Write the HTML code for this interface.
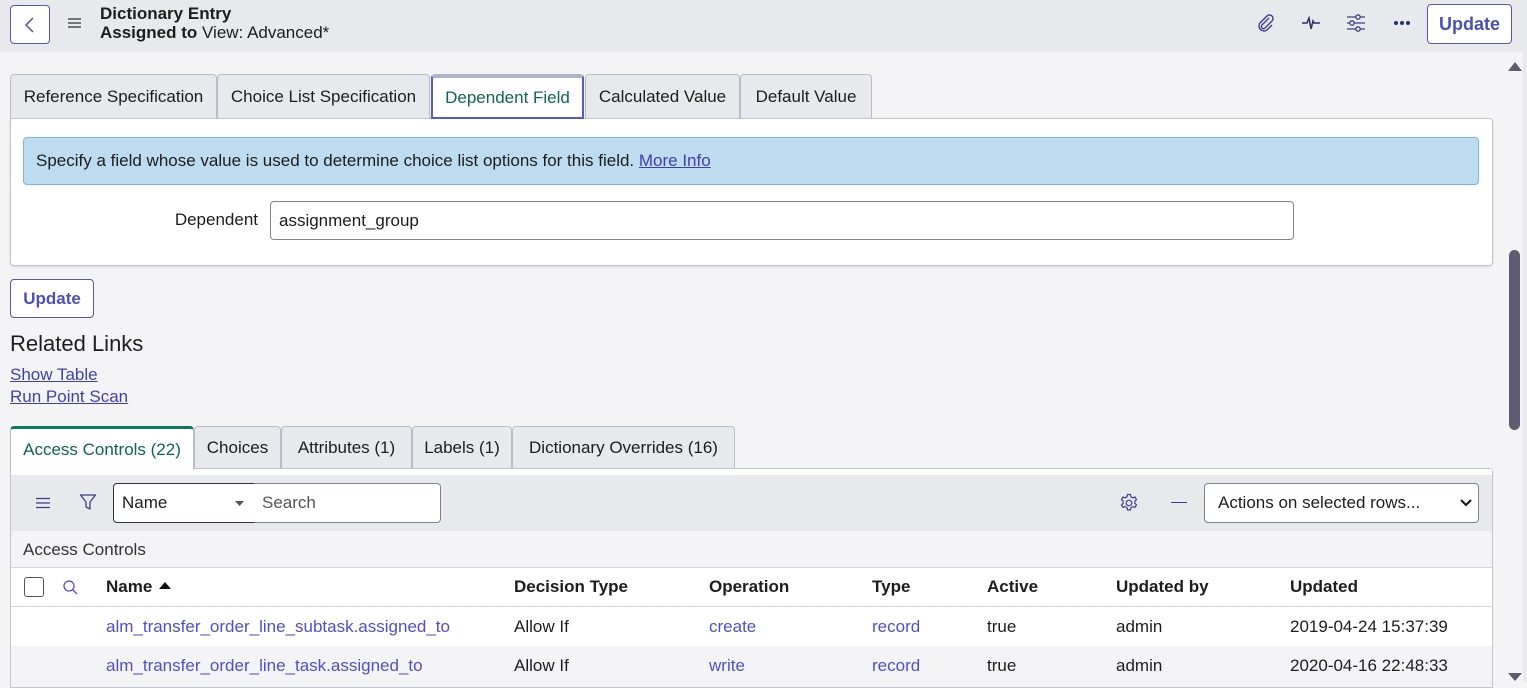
<!DOCTYPE html>
<html><head><meta charset="utf-8"><style>
*{box-sizing:border-box;margin:0;padding:0}
body{width:1527px;height:682px;overflow:hidden;background:#f4f4f6;font-family:"Liberation Sans",sans-serif;color:#1d1d1d;position:relative;font-size:17px}
.abs{position:absolute}
.hdr{left:0;top:0;width:1527px;height:52px;background:#e8e9ed}
.btn{border:1px solid #5654c0;border-radius:4px;background:#fff;color:#4b4fb8;font-weight:bold;font-size:17px;display:flex;align-items:center;justify-content:center}
.tab{top:74px;height:45px;background:#e8e9ed;border:1px solid #b9bcc6;border-bottom:none;border-radius:4px 4px 0 0;display:flex;align-items:center;justify-content:center;font-size:17px;color:#1d1d1d}
.tab2{top:426px;height:43px;background:#e8e9ed;border:1px solid #b9bcc6;border-bottom:none;border-radius:4px 4px 0 0;display:flex;align-items:center;justify-content:center;font-size:17px}
a{color:#3f3fb0;text-decoration:underline}
.th{top:577px;font-weight:bold;font-size:17px}
.td{font-size:17px}
.lnk{color:#4e4fd0}
</style></head><body>
<div class="abs hdr"></div>
<div class="abs btn" style="left:10px;top:5px;width:40px;height:39px"><svg width="14" height="18" viewBox="0 0 14 18"><path d="M10 2 L3 9 L10 16" fill="none" stroke="#4b4fb8" stroke-width="1.5"/></svg></div>
<svg class="abs" style="left:67px;top:17px" width="15" height="12"><path d="M1 2H14M1 6H14M1 10H14" stroke="#333" stroke-width="1.3"/></svg>
<div class="abs" style="left:100px;top:4px;font-weight:bold;font-size:17px;line-height:19px">Dictionary Entry<br>Assigned to <span style="font-weight:normal">View: Advanced*</span></div>
<svg class="abs" style="left:1256px;top:13px" width="20" height="20" viewBox="0 0 20 20"><path d="M13 5 L6 12 a2 2 0 0 0 3 3 L16 8 a3.5 3.5 0 0 0 -5 -5 L4 10 a5 5 0 0 0 7 7 L16 12" fill="none" stroke="#3b3e8e" stroke-width="1.4"/></svg>
<svg class="abs" style="left:1301px;top:13px" width="20" height="20"><path d="M1 10H6L8 5L10 16L12 8L13 10H19" fill="none" stroke="#2c2e6e" stroke-width="1.5"/></svg>
<svg class="abs" style="left:1346px;top:14px" width="20" height="18"><path d="M1 3H19M1 9H19M1 15H19" stroke="#3b3e8e" stroke-width="1.3"/><circle cx="12" cy="3" r="2.2" fill="#e8e9ed" stroke="#3b3e8e" stroke-width="1.3"/><circle cx="6" cy="9" r="2.2" fill="#e8e9ed" stroke="#3b3e8e" stroke-width="1.3"/><circle cx="12" cy="15" r="2.2" fill="#e8e9ed" stroke="#3b3e8e" stroke-width="1.3"/></svg>
<svg class="abs" style="left:1393px;top:20px" width="18" height="6"><circle cx="3" cy="3" r="2" fill="#2c2e6e"/><circle cx="9" cy="3" r="2" fill="#2c2e6e"/><circle cx="15" cy="3" r="2" fill="#2c2e6e"/></svg>
<div class="abs btn" style="left:1427px;top:4px;width:85px;height:40px;font-size:18px">Update</div>

<div class="abs" style="left:1523px;top:52px;width:4px;height:630px;background:#eaeaee"></div>
<svg class="abs" style="left:1507px;top:60px" width="16" height="12"><path d="M1 11L8 2L15 11Z" fill="#5e5c6e"/></svg>
<div class="abs" style="left:1509px;top:250px;width:11px;height:180px;border-radius:6px;background:#5e5c6e"></div>
<svg class="abs" style="left:1507px;top:672px" width="16" height="10"><path d="M1 1L8 9L15 1Z" fill="#5e5c6e"/></svg>

<div class="abs tab" style="left:10px;width:207px">Reference Specification</div>
<div class="abs tab" style="left:217px;width:213px">Choice List Specification</div>
<div class="abs tab" style="left:431px;width:153px;background:#fff;border:2px solid #4f5bd5;border-top:4px solid #b1b4c0;border-bottom:2px solid #4f5bd5;color:#0c6650;z-index:2">Dependent Field</div>
<div class="abs tab" style="left:585px;width:155px">Calculated Value</div>
<div class="abs tab" style="left:740px;width:132px">Default Value</div>

<div class="abs" style="left:10px;top:118px;width:1483px;height:148px;background:#fff;border:1px solid #c3c5cd;border-radius:0 4px 4px 4px;box-shadow:0 1px 2px rgba(0,0,0,.12)"></div>
<div class="abs" style="left:23px;top:137px;width:1456px;height:48px;background:#bedcf0;border:1px solid #79b6e4;border-radius:4px;padding:0 12px;display:flex;align-items:center;font-size:17px">Specify a field whose value is used to determine choice list options for this field.&nbsp;<a>More Info</a></div>
<div class="abs" style="left:130px;top:210px;width:128px;text-align:right;font-size:17px">Dependent</div>
<div class="abs" style="left:270px;top:201px;width:1024px;height:39px;border:1px solid #80838f;border-radius:4px;padding:0 8px;display:flex;align-items:center;font-size:17px">assignment_group</div>

<div class="abs btn" style="left:10px;top:279px;width:84px;height:39px">Update</div>
<div class="abs" style="left:10px;top:331px;font-size:22px">Related Links</div>
<div class="abs" style="left:10px;top:364px;font-size:17px;line-height:22px"><a>Show Table</a><br><a>Run Point Scan</a></div>

<div class="abs tab2" style="left:10px;width:184px;background:#fff;border-top:3px solid #0c7b5b;color:#0c6650;z-index:2;height:44px">Access Controls (22)</div>
<div class="abs tab2" style="left:194px;width:87px">Choices</div>
<div class="abs tab2" style="left:281px;width:131px">Attributes (1)</div>
<div class="abs tab2" style="left:412px;width:100px">Labels (1)</div>
<div class="abs tab2" style="left:512px;width:223px">Dictionary Overrides (16)</div>

<div class="abs" style="left:10px;top:468px;width:1483px;height:220px;background:#f4f4f6;border:1px solid #c3c5cd;border-radius:0 4px 0 0"></div>
<div class="abs" style="left:11px;top:469px;width:1481px;height:6px;background:#fff"></div>
<div class="abs" style="left:11px;top:475px;width:1481px;height:56px;background:#e8e9ed"></div>
<svg class="abs" style="left:35px;top:497px" width="16" height="12"><path d="M1 1.5H15M1 6H15M1 10.5H15" stroke="#3b3e8e" stroke-width="1.3"/></svg>
<svg class="abs" style="left:79px;top:493px" width="18" height="18"><path d="M1.5 2H16.5L11 9V16L7 14V9Z" fill="none" stroke="#3b3e8e" stroke-width="1.3" stroke-linejoin="round"/></svg>
<div class="abs" style="left:113px;top:483px;width:142px;height:40px;border:1px solid #333;border-radius:4px 0 0 4px;background:#fff;padding:0 8px;display:flex;align-items:center">Name<svg style="position:absolute;left:121px;top:17px" width="9" height="5"><path d="M0 0H9L4.5 5Z" fill="#555"/></svg></div>
<div class="abs" style="left:254px;top:483px;width:187px;height:40px;border:1px solid #80838f;border-left:none;border-radius:0 4px 4px 0;background:#fff;padding:0 8px;display:flex;align-items:center;color:#555">Search</div>
<svg class="abs" style="left:1119px;top:493px" width="20" height="20" viewBox="0 0 20 20"><path d="M8.5 1.5h3l.5 2.3 1.8 1 2.2-.8 1.5 2.6-1.7 1.6v2l1.7 1.6-1.5 2.6-2.2-.8-1.8 1-.5 2.3h-3l-.5-2.3-1.8-1-2.2.8-1.5-2.6 1.7-1.6v-2L2.5 6.6 4 4l2.2.8 1.8-1z" fill="none" stroke="#3b3e8e" stroke-width="1.2"/><circle cx="10" cy="10" r="2.8" fill="none" stroke="#3b3e8e" stroke-width="1.2"/></svg>
<div class="abs" style="left:1171px;top:502px;width:16px;height:1.2px;background:#3b3e8e"></div>
<div class="abs" style="left:1204px;top:483px;width:275px;height:40px;border:1px solid #80838f;border-radius:4px;background:#fff;padding:0 13px;display:flex;align-items:center">Actions on selected rows...<svg style="position:absolute;right:6px;top:15px" width="12" height="8"><path d="M1 1L6 6L11 1" fill="none" stroke="#111" stroke-width="2"/></svg></div>
<div class="abs" style="left:23px;top:540px;color:#333">Access Controls</div>
<div class="abs" style="left:11px;top:567px;width:1481px;height:40px;background:#fff;border-top:1px solid #d5d6dc;border-bottom:1px solid #d5d6dc"></div>
<div class="abs" style="left:24px;top:577px;width:20px;height:20px;border:1px solid #555;border-radius:3px;background:#fff"></div>
<svg class="abs" style="left:62px;top:579px" width="17" height="17"><circle cx="7" cy="7" r="5" fill="none" stroke="#4e4fd0" stroke-width="1.3"/><path d="M10.5 10.5L15 15" stroke="#4e4fd0" stroke-width="1.3"/></svg>
<div class="abs th" style="left:106px">Name <svg width="12" height="8" style="vertical-align:3px;margin-left:2px"><path d="M0 8L6 1L12 8Z" fill="#111"/></svg></div>
<div class="abs th" style="left:514px">Decision Type</div>
<div class="abs th" style="left:709px">Operation</div>
<div class="abs th" style="left:872px">Type</div>
<div class="abs th" style="left:987px">Active</div>
<div class="abs th" style="left:1116px">Updated by</div>
<div class="abs th" style="left:1290px">Updated</div>
<div class="abs" style="left:11px;top:607px;width:1481px;height:39px;background:#fff"></div>
<div class="abs td lnk" style="left:106px;top:617px">alm_transfer_order_line_subtask.assigned_to</div>
<div class="abs td" style="left:514px;top:617px">Allow If</div>
<div class="abs td lnk" style="left:709px;top:617px">create</div>
<div class="abs td lnk" style="left:872px;top:617px">record</div>
<div class="abs td" style="left:987px;top:617px">true</div>
<div class="abs td" style="left:1116px;top:617px">admin</div>
<div class="abs td" style="left:1290px;top:617px">2019-04-24 15:37:39</div>
<div class="abs td lnk" style="left:106px;top:656px">alm_transfer_order_line_task.assigned_to</div>
<div class="abs td" style="left:514px;top:656px">Allow If</div>
<div class="abs td lnk" style="left:709px;top:656px">write</div>
<div class="abs td lnk" style="left:872px;top:656px">record</div>
<div class="abs td" style="left:987px;top:656px">true</div>
<div class="abs td" style="left:1116px;top:656px">admin</div>
<div class="abs td" style="left:1290px;top:656px">2020-04-16 22:48:33</div>
</body></html>
